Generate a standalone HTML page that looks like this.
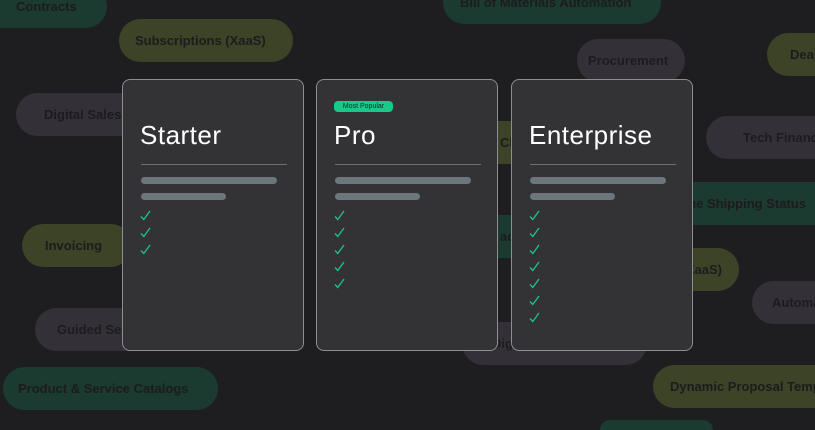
<!DOCTYPE html>
<html><head><style>
*{margin:0;padding:0;box-sizing:border-box}
html,body{width:815px;height:430px;overflow:hidden}
body{background:#1e1e20;position:relative;font-family:"Liberation Sans",sans-serif}
.p{position:absolute;height:43px;border-radius:22px;font-weight:bold;font-size:13px;color:#1c1c1e;line-height:43px;white-space:nowrap;overflow:hidden}
.g{background:#1b3a30}.o{background:#3d4326}.y{background:#333137}
.c{position:absolute;top:79px;width:182px;height:272px;background:#333335;border:1px solid #8d8d92;border-radius:8px}
.t{position:absolute;left:17px;top:40px;font-size:26px;color:#fff;letter-spacing:0.5px}
.hr{position:absolute;left:18px;top:84px;width:146px;height:1px;background:#6b6e72}
.b{position:absolute;left:18px;height:7px;border-radius:4px;background:#6d767c}
.k{position:absolute;left:17px;width:11px;height:11px}
.badge{position:absolute;left:17px;top:21px;width:59px;height:11px;border-radius:4px;background:#19c98a;color:#0d2a20;font-size:7px;line-height:11px;text-align:center}
</style></head><body>
<div class="p g" style="left:-30px;top:-15px;width:137px;padding-left:46px">Contracts</div>
<div class="p o" style="left:119px;top:19px;width:174px;padding-left:16px">Subscriptions (XaaS)</div>
<div class="p y" style="left:16px;top:93px;width:150px;padding-left:28px">Digital Sales</div>
<div class="p o" style="left:22px;top:224px;width:110px;padding-left:23px">Invoicing</div>
<div class="p y" style="left:35px;top:308px;width:130px;padding-left:22px">Guided Selling</div>
<div class="p g" style="left:3px;top:367px;width:215px;padding-left:15px">Product &amp; Service Catalogs</div>
<div class="p g" style="left:443px;top:-19px;width:218px;padding-left:17px">Bill of Materials Automation</div>
<div class="p y" style="left:577px;top:39px;width:108px;padding-left:11px">Procurement</div>
<div class="p o" style="left:767px;top:33px;width:48px;border-radius:22px 0 0 22px;padding-left:23px">Deal</div>
<div class="p y" style="left:706px;top:116px;width:109px;border-radius:22px 0 0 22px;padding-left:37px">Tech Financing</div>
<div class="p o" style="left:470px;top:121px;width:60px;padding-left:30px">Cl</div>
<div class="p g" style="left:693px;top:182px;width:122px;border-radius:0"><span style="position:absolute;left:-12px">ime Shipping Status</span></div>
<div class="p g" style="left:470px;top:215px;width:60px;padding-left:30px">ad</div>
<div class="p o" style="left:600px;top:248px;width:139px;text-align:right;padding-right:17px">(XaaS)</div>
<div class="p y" style="left:752px;top:281px;width:63px;border-radius:22px 0 0 22px;padding-left:20px">Automation</div>
<div class="p y" style="left:462px;top:322px;width:185px;padding-left:30px">Digital</div>
<div class="p o" style="left:653px;top:365px;width:162px;border-radius:22px 0 0 22px;padding-left:17px">Dynamic Proposal Templates</div>
<div class="p g" style="left:600px;top:420px;width:113px;height:10px;border-radius:22px 22px 0 0"></div>

<svg width="0" height="0" style="position:absolute"><defs><symbol id="ck" viewBox="0 0 11 11"><path d="M1 6.5 L3.8 9.5 L10 1" fill="none" stroke="#1dc58a" stroke-width="1.3"/></symbol></defs></svg>

<div class="c" style="left:122px"><div class="t">Starter</div><div class="hr"></div>
<div class="b" style="top:97px;width:136px"></div><div class="b" style="top:113px;width:85px"></div>
<svg class="k" style="top:130px"><use href="#ck"/></svg><svg class="k" style="top:147px"><use href="#ck"/></svg><svg class="k" style="top:164px"><use href="#ck"/></svg></div>

<div class="c" style="left:316px"><div class="badge">Most Popular</div><div class="t">Pro</div><div class="hr"></div>
<div class="b" style="top:97px;width:136px"></div><div class="b" style="top:113px;width:85px"></div>
<svg class="k" style="top:130px"><use href="#ck"/></svg><svg class="k" style="top:147px"><use href="#ck"/></svg><svg class="k" style="top:164px"><use href="#ck"/></svg><svg class="k" style="top:181px"><use href="#ck"/></svg><svg class="k" style="top:198px"><use href="#ck"/></svg></div>

<div class="c" style="left:511px"><div class="t">Enterprise</div><div class="hr"></div>
<div class="b" style="top:97px;width:136px"></div><div class="b" style="top:113px;width:85px"></div>
<svg class="k" style="top:130px"><use href="#ck"/></svg><svg class="k" style="top:147px"><use href="#ck"/></svg><svg class="k" style="top:164px"><use href="#ck"/></svg><svg class="k" style="top:181px"><use href="#ck"/></svg><svg class="k" style="top:198px"><use href="#ck"/></svg><svg class="k" style="top:215px"><use href="#ck"/></svg><svg class="k" style="top:232px"><use href="#ck"/></svg></div>
</body></html>
